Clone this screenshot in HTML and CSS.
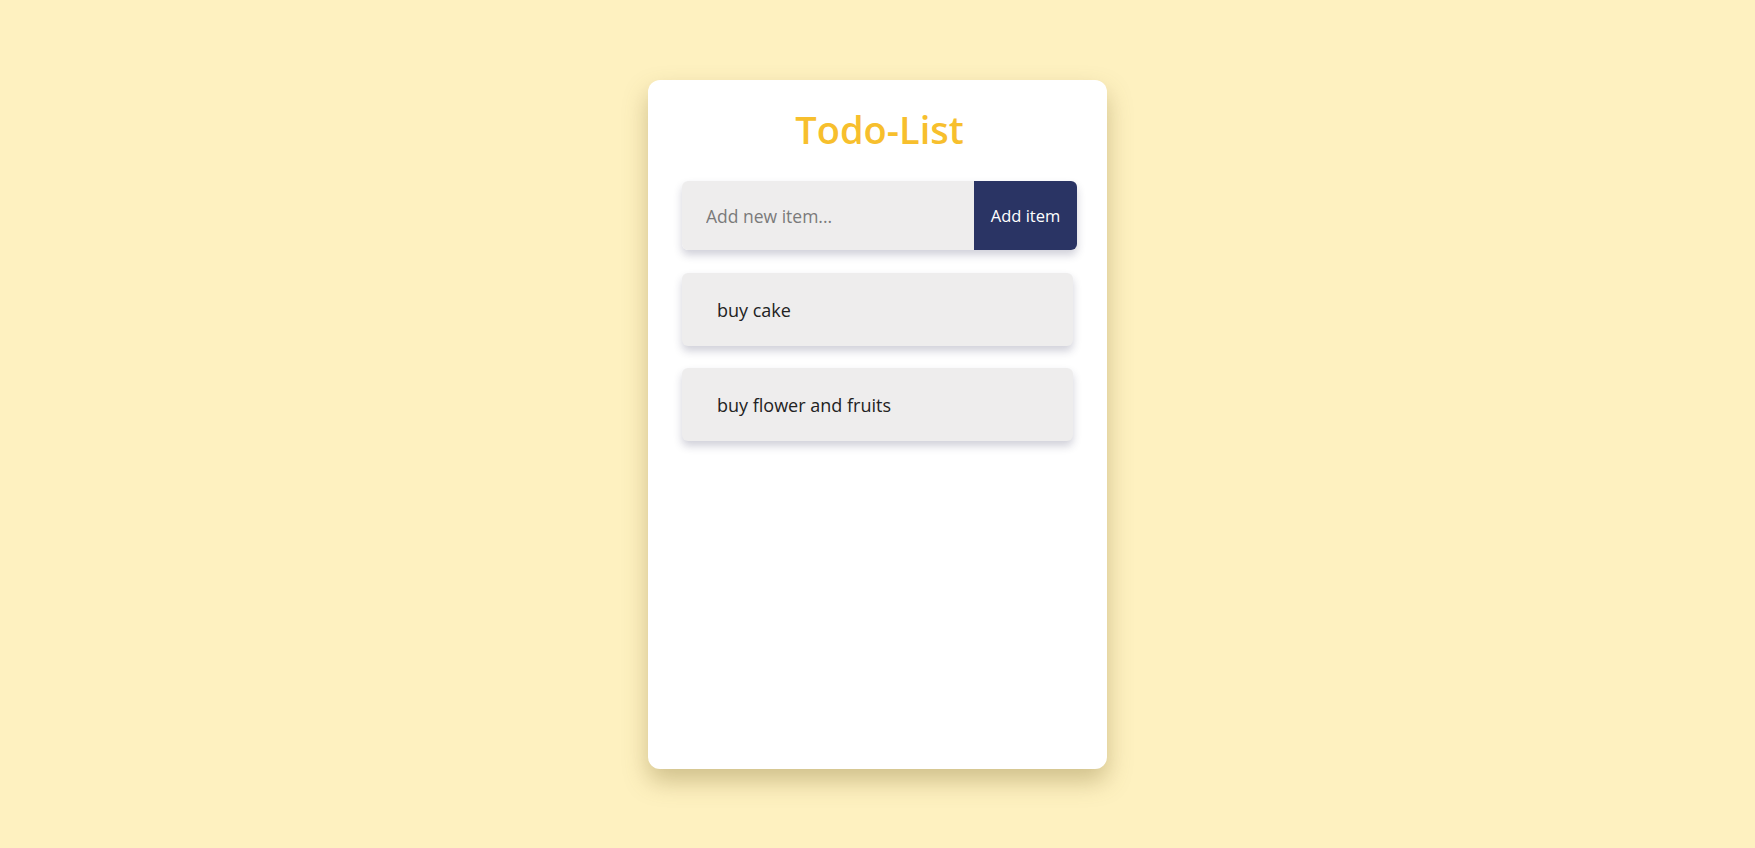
FILE: index.html
```html
<!DOCTYPE html>
<html>
<head>
<meta charset="utf-8">
<link rel="stylesheet" href="styles.css">
</head>
<body>
<main class="page">
  <section class="card">
    <h1 class="title">Todo-List</h1>
    <form class="add-form">
      <input class="add-input" type="text" placeholder="Add new item...">
      <button class="add-btn" type="button">Add item</button>
    </form>
    <ul class="items">
      <li class="item">buy cake</li>
      <li class="item">buy flower and fruits</li>
    </ul>
  </section>
</main>
</body>
</html>
```
FILE: styles.css
```css
* { box-sizing: border-box; }
html, body {
  margin: 0;
  height: 100%;
  background: #fef1c0;
  font-family: "Open Sans", "Liberation Sans", sans-serif;
}
.page {
  display: flex;
  justify-content: center;
  padding-top: 80px;
}
.card {
  width: 459px;
  height: 689px;
  background: #fff;
  border-radius: 12px;
  box-shadow: 0 12px 24px rgba(120, 100, 40, 0.35);
  padding: 26px 30px 0 34px;
}
.title {
  margin: 0;
  text-align: center;
  color: #f7bf2d;
  font-size: 38px;
  font-weight: 600;
  line-height: 46px;
}
.add-form {
  display: flex;
  width: 395px;
  height: 69px;
  margin-top: 29px;
  border-radius: 6px;
  box-shadow: 0 5px 8px rgba(40, 40, 80, 0.22);
}
.add-input {
  flex: 1;
  border: none;
  outline: none;
  background: #eeeded;
  border-radius: 6px 0 0 6px;
  padding: 0 24px;
  font-family: inherit;
  font-size: 17.5px;
  color: #333;
}
.add-input::placeholder { color: #7a7a7a; }
.add-btn {
  width: 103px;
  border: none;
  background: #2a3464;
  color: #fff;
  border-radius: 0 6px 6px 0;
  font-family: inherit;
  font-size: 16.5px;
  font-weight: 500;
  padding: 0;
}
.items {
  list-style: none;
  margin: 23px 0 0;
  padding: 0;
  width: 391px;
  display: flex;
  flex-direction: column;
  gap: 22px;
}
.item {
  height: 73px;
  display: flex;
  align-items: center;
  padding-left: 35px;
  background: #eeeded;
  border-radius: 6px;
  box-shadow: 0 5px 8px rgba(40, 40, 80, 0.22);
  font-size: 18px;
  color: #222;
}
```
